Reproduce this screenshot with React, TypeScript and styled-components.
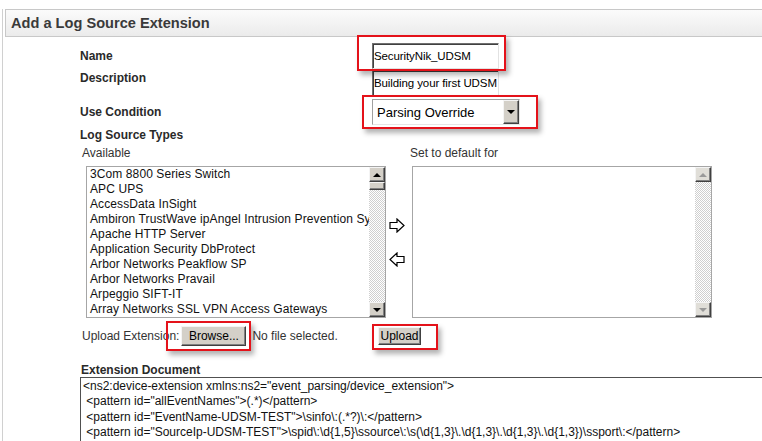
import React from "react";
import styled, { createGlobalStyle } from "styled-components";

const GlobalStyle = createGlobalStyle`
  html, body {
    margin: 0;
    padding: 0;
    background: #fff;
  }
  body {
    font-family: "Liberation Sans", Arial, sans-serif;
    font-size: 12px;
    color: #333;
  }
`;

const Page = styled.div`
  width: 762px;
  height: 441px;
  overflow: hidden;
  padding: 9px 0 0 2px;
  box-sizing: border-box;
`;

const Frame = styled.div`
  height: 100%;
  border-left: 1px solid #d0d0d0;
  padding-left: 2px;
`;

const Header = styled.div`
  height: 26px;
  margin-right: -10px;
  border: 1px solid #c8c8c8;
  background: linear-gradient(#fbfbfb, #ebebeb);
  display: flex;
  align-items: center;
  padding-left: 5px;
  font: bold 14.6px "Liberation Sans", Arial, sans-serif;
  color: #3a3a3a;
`;

const Form = styled.div`
  padding-left: 75px;
`;

const Fields = styled.div`
  display: grid;
  grid-template-columns: 292px auto;
  row-gap: 1px;
  margin-top: 6px;
  justify-items: start;
`;

const FieldLabel = styled.div<{ $top?: boolean; $gap?: number }>`
  font-weight: bold;
  font-size: 12px;
  line-height: 14px;
  color: #2a2a2a;
  align-self: ${(p) => (p.$top ? "start" : "center")};
  padding-top: ${(p) => (p.$top ? 1 : 0)}px;
  margin-top: ${(p) => p.$gap ?? 0}px;
`;

const SectionLabel = styled.div<{ $gap: number; $indent?: number }>`
  font-weight: bold;
  font-size: 12px;
  line-height: 14px;
  color: #2a2a2a;
  margin-top: ${(p) => p.$gap}px;
  margin-left: ${(p) => p.$indent ?? 0}px;
`;

const Highlight = styled.div<{ $t: number; $r: number; $b: number; $l: number; $gap?: number; $left?: number }>`
  position: relative;
  display: inline-flex;
  margin-top: ${(p) => p.$gap ?? 0}px;
  margin-left: ${(p) => p.$left ?? 0}px;
  &::after {
    content: "";
    position: absolute;
    top: -${(p) => p.$t}px;
    right: -${(p) => p.$r}px;
    bottom: -${(p) => p.$b}px;
    left: -${(p) => p.$l}px;
    border: 2px solid #e4121a;
    box-shadow: 3px 4px 5px rgba(0, 0, 0, 0.3);
    pointer-events: none;
  }
`;

const TextBox = styled.div`
  width: 127px;
  height: 26px;
  box-sizing: border-box;
  border: 1px solid;
  border-color: #707070 #e2e2e2 #e2e2e2 #707070;
  box-shadow: inset 1px 1px 0 #404040;
  padding: 0 0 0 1px;
  display: flex;
  align-items: center;
  font-size: 11.5px;
  letter-spacing: -0.1px;
  color: #000;
  white-space: nowrap;
  overflow: hidden;
`;

const SelectBox = styled.div`
  width: 148px;
  height: 26px;
  box-sizing: border-box;
  border: 1px solid;
  border-color: #a0a0a0 #e6e6e6 #e6e6e6 #a0a0a0;
  display: flex;
  align-items: stretch;
  background: #fff;
`;

const SelectText = styled.div`
  flex: 1;
  display: flex;
  align-items: center;
  padding-left: 4px;
  font-size: 13px;
  color: #000;
`;

const Raised = styled.div`
  box-sizing: border-box;
  background: #d4d0c8;
  border: 1px solid;
  border-color: #f4f4f4 #404040 #404040 #f4f4f4;
  box-shadow: inset -1px -1px 0 #808080;
  display: flex;
  align-items: center;
  justify-content: center;
`;

const DropButton = styled(Raised)`
  width: 16px;
`;

const Triangle = styled.span<{ $dir: "up" | "down"; $off?: boolean }>`
  width: 0;
  height: 0;
  border-left: 4px solid transparent;
  border-right: 4px solid transparent;
  ${(p) =>
    p.$dir === "up"
      ? `border-bottom: 4px solid ${p.$off ? "#9a9a9a" : "#000"};`
      : `border-top: 4px solid ${p.$off ? "#9a9a9a" : "#000"};`}
`;

const Lists = styled.div`
  display: grid;
  grid-template-columns: 304px 24px auto;
  margin-left: 2px;
  margin-top: 4px;
`;

const ColumnLabel = styled.div`
  font-size: 12px;
  line-height: 14px;
  color: #333;
  margin-bottom: 6px;
`;

const ListBox = styled.div<{ $indent: number }>`
  width: 300px;
  height: 152px;
  box-sizing: border-box;
  margin-left: ${(p) => p.$indent}px;
  border: 1px solid #a6a6a6;
  display: flex;
  background: #fff;
`;

const Items = styled.div`
  flex: 1;
  overflow: hidden;
  padding-left: 3px;
`;

const Item = styled.div`
  font-size: 12px;
  line-height: 15px;
  letter-spacing: 0.1px;
  color: #111;
  white-space: nowrap;
`;

const ScrollBar = styled.div`
  width: 16px;
  display: flex;
  flex-direction: column;
`;

const ScrollButton = styled(Raised)<{ $off?: boolean }>`
  height: 15px;
  background: ${(p) => (p.$off ? "#e0ded8" : "#d4d0c8")};
`;

const Thumb = styled(Raised)`
  height: 8px;
`;

const Track = styled.div`
  flex: 1;
  background-image: repeating-conic-gradient(#cfcfcf 0% 25%, #ffffff 0% 50%);
  background-size: 2px 2px;
`;

const Arrows = styled.div`
  display: flex;
  flex-direction: column;
  align-items: center;
  justify-content: center;
  gap: 19px;
  padding-right: 2px;
`;

const UploadRow = styled.div`
  display: flex;
  align-items: center;
  margin: 8px 0 0 2px;
  height: 20px;
`;

const FileGroup = styled.div`
  width: 296px;
  display: flex;
  align-items: center;
  flex-shrink: 0;
`;

const PlainText = styled.span<{ $gap?: number }>`
  font-size: 12px;
  color: #333;
  margin-left: ${(p) => p.$gap ?? 0}px;
  white-space: nowrap;
`;

const PushButton = styled(Raised)<{ $w: number; $h: number }>`
  width: ${(p) => p.$w}px;
  height: ${(p) => p.$h}px;
  font-size: 12px;
  color: #000;
`;

const DocArea = styled.div`
  width: 720px;
  height: 80px;
  box-sizing: border-box;
  border: 1px solid #505050;
  padding: 1px 0 0 2px;
  overflow: hidden;
`;

const DocLine = styled.div`
  font-size: 12px;
  line-height: 15.4px;
  color: #111;
  white-space: pre;
`;

const available = [
  "3Com 8800 Series Switch",
  "APC UPS",
  "AccessData InSight",
  "Ambiron TrustWave ipAngel Intrusion Prevention System",
  "Apache HTTP Server",
  "Application Security DbProtect",
  "Arbor Networks Peakflow SP",
  "Arbor Networks Pravail",
  "Arpeggio SIFT-IT",
  "Array Networks SSL VPN Access Gateways",
];

const docLines = [
  '<ns2:device-extension xmlns:ns2="event_parsing/device_extension">',
  ' <pattern id="allEventNames">(.*)</pattern>',
  ' <pattern id="EventName-UDSM-TEST">\\sinfo\\:(.*?)\\:</pattern>',
  ' <pattern id="SourceIp-UDSM-TEST">\\spid\\:\\d{1,5}\\ssource\\:\\s(\\d{1,3}\\.\\d{1,3}\\.\\d{1,3}\\.\\d{1,3})\\ssport\\:</pattern>',
];

function MoveArrow({ left }: { left?: boolean }) {
  return (
    <svg width="16" height="15" viewBox="0 0 16 15" style={left ? { transform: "scaleX(-1)" } : undefined}>
      <polygon
        points="1,4.5 8,4.5 8,1 15,7.5 8,14 8,10.5 1,10.5"
        fill="#fff"
        stroke="#000"
        strokeWidth="1.2"
        strokeLinejoin="miter"
      />
    </svg>
  );
}

function Scroller({ off }: { off?: boolean }) {
  return (
    <ScrollBar>
      <ScrollButton $off={off}>
        <Triangle $dir="up" $off={off} />
      </ScrollButton>
      {!off && <Thumb />}
      <Track />
      <ScrollButton $off={off}>
        <Triangle $dir="down" $off={off} />
      </ScrollButton>
    </ScrollBar>
  );
}

export default function App() {
  return (
    <>
      <GlobalStyle />
      <Page>
        <Frame>
          <Header>Add a Log Source Extension</Header>
          <Form>
            <Fields>
              <FieldLabel>Name</FieldLabel>
              <Highlight $t={8} $r={7} $b={2} $l={15}>
                <TextBox>SecurityNik_UDSM</TextBox>
              </Highlight>
              <FieldLabel $top>Description</FieldLabel>
              <TextBox>Building your first UDSM</TextBox>
              <FieldLabel $gap={2}>Use Condition</FieldLabel>
              <Highlight $t={4} $r={18} $b={4} $l={10} $gap={2}>
                <SelectBox>
                  <SelectText>Parsing Override</SelectText>
                  <DropButton>
                    <Triangle $dir="down" />
                  </DropButton>
                </SelectBox>
              </Highlight>
            </Fields>
            <SectionLabel $gap={3}>Log Source Types</SectionLabel>
            <Lists>
              <ColumnLabel>Available</ColumnLabel>
              <div />
              <ColumnLabel>Set to default for</ColumnLabel>
              <ListBox $indent={4}>
                <Items>
                  {available.map((name) => (
                    <Item key={name}>{name}</Item>
                  ))}
                </Items>
                <Scroller />
              </ListBox>
              <Arrows>
                <MoveArrow />
                <MoveArrow left />
              </Arrows>
              <ListBox $indent={2}>
                <Items />
                <Scroller off />
              </ListBox>
            </Lists>
            <UploadRow>
              <FileGroup>
                <PlainText>Upload Extension:</PlainText>
                <Highlight $t={5} $r={5} $b={5} $l={15} $left={2}>
                  <PushButton $w={65} $h={20}>Browse...</PushButton>
                </Highlight>
                <PlainText $gap={6}>No file selected.</PlainText>
              </FileGroup>
              <Highlight $t={3} $r={17} $b={5} $l={6}>
                <PushButton $w={43} $h={18}>Upload</PushButton>
              </Highlight>
            </UploadRow>
            <SectionLabel $gap={17} $indent={1}>Extension Document</SectionLabel>
            <DocArea>
              {docLines.map((line, i) => (
                <DocLine key={i}>{line}</DocLine>
              ))}
            </DocArea>
          </Form>
        </Frame>
      </Page>
    </>
  );
}
